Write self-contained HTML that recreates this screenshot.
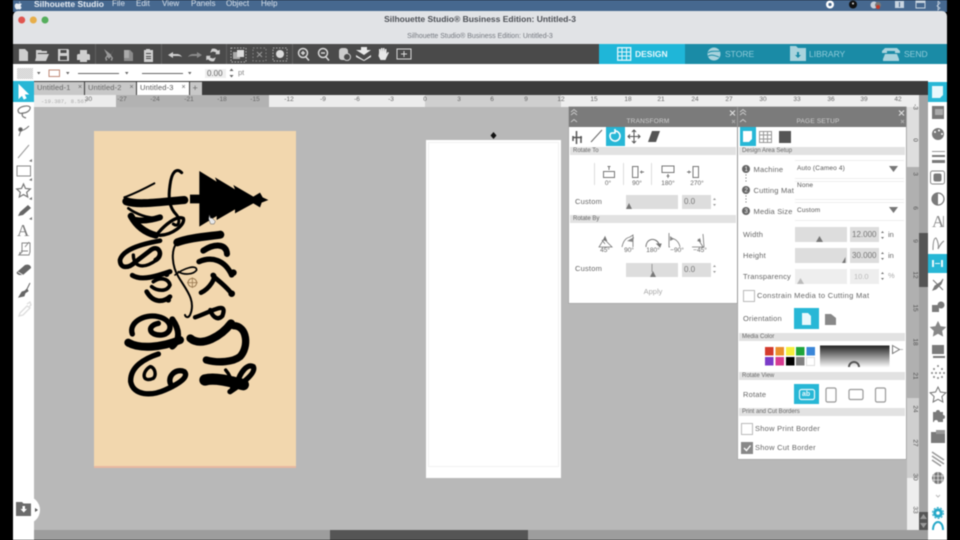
<!DOCTYPE html>
<html><head><meta charset="utf-8"><style>
html,body{margin:0;padding:0;background:#000}
#r{position:relative;width:960px;height:540px;overflow:hidden;background:#000;font-family:"Liberation Sans",sans-serif;filter:blur(.5px)}
.a,.t,.c{position:absolute}
.t{white-space:nowrap;line-height:1;color:#555;font-size:8px}
.c{white-space:nowrap;line-height:1;transform:translateX(-50%);color:#666;font-size:6.5px}
.v{position:absolute;transform:translate(-50%,-50%) rotate(90deg);font-size:6.5px;color:#555;line-height:1}
.b{position:absolute;background:#e2e2e2;height:8px;font-size:6px;color:#666;line-height:8px;padding-left:3px;box-sizing:border-box}
svg{position:absolute;overflow:visible}
.s{position:absolute;background:#ddd}
</style></head><body><div id="r">
<!-- window -->
<div class="a" style="left:13px;top:0;width:934px;height:12px;background:#46688f"></div>
<div class="a" style="left:13px;top:11px;width:934px;height:34px;background:#e1e3e6;border-radius:5px 5px 0 0"></div>
<div class="a" style="left:13px;top:44px;width:586px;height:20px;background:#4a4a4a"></div>
<div class="a" style="left:599px;top:44px;width:86px;height:20px;background:#1fb6d8"></div>
<div class="a" style="left:685px;top:44px;width:262px;height:20px;background:#1a8ba6"></div>
<div class="a" style="left:13px;top:64px;width:934px;height:17px;background:#fff"></div>
<div class="a" style="left:13px;top:81px;width:915px;height:14px;background:#3b3b3b"></div>
<div class="a" style="left:34px;top:95px;width:894px;height:445px;background:#b8b8b8"></div>
<div class="a" style="left:13px;top:81px;width:21px;height:459px;background:#fff"></div>
<div class="a" style="left:928px;top:81px;width:19px;height:459px;background:#fff"></div>
<!-- menu -->
<svg style="left:14px;top:0" width="9" height="10" viewBox="0 0 9 10"><path d="M6 1.500C5.400 1.800 5 2.300 5 3 5.700 3 6.200 2.400 6 1.500ZM7.700 7.400C7.200 8.500 6.600 9.500 5.800 9.500 5.200 9.500 5 9.100 4.400 9.100 3.700 9.100 3.500 9.500 2.900 9.500 1.900 9.500.7 7.600.7 5.900.7 4.300 1.700 3.400 2.700 3.400 3.400 3.400 3.900 3.800 4.400 3.800 4.800 3.800 5.400 3.300 6.200 3.400 6.900 3.400 7.400 3.700 7.800 4.200 6.400 5 6.600 7 7.700 7.400Z" fill="#e8edf3"/></svg>
<div class="t" style="left:34px;top:0;font-size:8.5px;font-weight:bold;color:#e6ebf2">Silhouette Studio</div>
<div class="t" style="left:112px;top:0;font-size:8px;color:#d7e0ea">File</div>
<div class="t" style="left:136px;top:0;font-size:8px;color:#d7e0ea">Edit</div>
<div class="t" style="left:162px;top:0;font-size:8px;color:#d7e0ea">View</div>
<div class="t" style="left:191px;top:0;font-size:8px;color:#d7e0ea">Panels</div>
<div class="t" style="left:226px;top:0;font-size:8px;color:#d7e0ea">Object</div>
<div class="t" style="left:261px;top:0;font-size:8px;color:#d7e0ea">Help</div>
<svg style="left:820px;top:0" width="125" height="11" viewBox="0 0 125 11">
<circle cx="10" cy="4.500" r="4" fill="#fff"/><circle cx="10" cy="4.500" r="1.600" fill="#46688f"/>
<circle cx="33" cy="4.500" r="4" fill="#111"/><circle cx="33" cy="3.500" r="1" fill="#ddd"/>
<circle cx="54" cy="5" r="3.500" fill="#c8d0da"/><circle cx="58" cy="5" r="3" fill="#777"/><circle cx="58" cy="7" r="2" fill="#c0392b"/>
<rect x="75" y="1" width="9" height="7" fill="#c8d4e0"/><rect x="79" y="2" width="1" height="5" fill="#46688f"/>
<rect x="96" y="1" width="9" height="7" fill="none" stroke="#c8d4e0"/><rect x="96" y="1" width="9" height="2" fill="#c8d4e0"/>
<path d="M118 1l2 2-3 3 3 2-2 2V1" fill="none" stroke="#c8d4e0" stroke-width=".8"/></svg>
<!-- titles -->
<svg style="left:15px;top:15px" width="36" height="10"><circle cx="6.700" cy="5" r="3.500" fill="#e0554f"/><circle cx="18.300" cy="5" r="3.500" fill="#e7ae4a"/><circle cx="30" cy="5" r="3.500" fill="#55ae5c"/></svg>
<div class="c" style="left:480px;top:15px;font-size:8.500px;font-weight:bold;color:#4c4f55">Silhouette Studio® Business Edition: Untitled-3</div>
<div class="c" style="left:480px;top:32.500px;font-size:7px;color:#73777e">Silhouette Studio® Business Edition: Untitled-3</div>
<!-- toolbar icons -->
<svg style="left:13px;top:44px" width="410" height="20" viewBox="13 44 410 20" fill="#cfcfcf">
<path d="M19 49h6l3 3v9h-9z"/>
<path d="M36 50h5l1 1h5v2h-9l-2 6zM37 54h12l-3 7H35z"/>
<path d="M58 49h10l1 1v11H58zM60.500 50v3h6v-3zM60 56v4h7v-4z" fill-rule="evenodd"/>
<path d="M78 54h2v-4h7v4h2l1 1v5h-3v2h-7v-2h-3v-5z"/>
<path d="M104 49l3 6-2 3 1 3 1.500-1-1-2 1-1 1.500 2 1.500-2 1 1-1 2 1.500 1 1-3-2-3 3-6-3 5.500z" fill="#9a9a9a"/>
<path d="M124 50h6l3 3v8h-9z" fill="#8a8a8a"/><rect x="124" y="50" width="5" height="8" fill="#aaa"/>
<path d="M144 50h2v-1h4v1h3v12h-9zM146 53v1h5v-1zM146 56v1h5v-1zM146 58v1h5v-1z" fill-rule="evenodd"/>
<path d="M168 55l5-3v2h4c2 0 4 1 5 3-2-1-3-1-5-1h-4v2z"/>
<path d="M202 55l-5-3v2h-4c-2 0-4 1-5 3 2-1 3-1 5-1h4v2z" fill="#8a8a8a"/>
<path d="M212 49a6 6 0 0 1 6 2l1.500-1v4h-4l1-1a4 4 0 0 0-6-.500zM214 61a6 6 0 0 1-6-2l-1.500 1v-4h4l-1 1a4 4 0 0 0 6 .500z" stroke="#cfcfcf" stroke-width=".5"/>
<rect x="233" y="52" width="7" height="7" fill="#aaa"/><rect x="237" y="50" width="7" height="7" fill="#ddd"/><rect x="231" y="48" width="15" height="14" fill="none" stroke="#aaa" stroke-dasharray="1.500 1.500"/>
<rect x="253" y="48" width="13" height="13" fill="none" stroke="#888" stroke-dasharray="1.500 2"/><path d="M257 52l5 5m0-5l-5 5" stroke="#999" fill="none"/>
<rect x="273" y="48" width="14" height="13" fill="none" stroke="#aaa" stroke-dasharray="1.500 1.500"/><circle cx="280" cy="54" r="4" fill="#ddd"/>
<g fill="none" stroke="#d8d8d8" stroke-width="1.500"><circle cx="303" cy="53" r="4.500"/><path d="M306 57l3 3.500M301 53h4M303 51v4"/><circle cx="323" cy="53" r="4.500"/><path d="M326 57l3 3.500M321 53h4"/></g>
<rect x="339" y="48" width="9" height="12" rx="3" fill="#ccc"/><circle cx="347" cy="57" r="3.500" fill="#4a4a4a" stroke="#ccc"/>
<path d="M361 47h6v3h4l-7 5-8-5h5zM356 55l8 5 7-5v2l-7 4-8-4z" fill="#e8e8e8"/>
<path d="M379 53v-4h1.500v3l.5-4h1.500v4l.5-4h1.500v4l.5-3h1.500v5l1-2 1.500.5-2.500 5-1 2.500h-5l-2-4z" fill="#e8e8e8"/>
<rect x="397" y="49" width="14" height="10" fill="none" stroke="#d8d8d8" stroke-width="1"/><path d="M404 51v6M401 54h6" stroke="#d8d8d8" fill="none"/>
<path d="M95.500 44v20M161.500 44v20M226.500 44v20M292.500 44v20" stroke="#616161" fill="none"/>
</svg>
<!-- nav -->
<svg style="left:617px;top:47px" width="15" height="14"><rect x=".7" y=".7" width="13" height="12.500" fill="none" stroke="#e4f6fb" stroke-width="1.300"/><path d="M5 1v12M9.500 1v12M1 5h13M1 9h13" stroke="#e4f6fb"/></svg>
<div class="t" style="left:635px;top:50px;font-size:8.500px;font-weight:bold;color:#e8f8fc">DESIGN</div>
<svg style="left:707px;top:47px" width="14" height="14"><circle cx="7" cy="7" r="6.500" fill="#a9d3dd"/><path d="M1 6c3-3 8-1 12-2M1 9c4-2 8 0 11 1" stroke="#1a8ba6" fill="none"/></svg>
<div class="t" style="left:725px;top:50px;font-size:8.500px;color:#90cbd9">STORE</div>
<svg style="left:790px;top:46px" width="16" height="15"><path d="M0 0h6l2 2h8v13H0z" fill="#a9d3dd"/><path d="M7 6h2v3h2l-3 3-3-3h2z" fill="#1a8ba6"/></svg>
<div class="t" style="left:809px;top:50px;font-size:8.500px;color:#90cbd9">LIBRARY</div>
<svg style="left:882px;top:48px" width="18" height="13"><path d="M0 3l3-3h12l3 3v2h-5V3H5v2H0zM3 6h12l2 5v2H1v-2z" fill="#a9d3dd"/></svg>
<div class="t" style="left:904px;top:50px;font-size:8.500px;color:#90cbd9">SEND</div>
<!-- options -->
<svg style="left:13px;top:64px" width="240" height="17" viewBox="13 64 240 17">
<defs><pattern id="p" width="2" height="2" patternUnits="userSpaceOnUse"><rect width="2" height="2" fill="#eee"/><rect width="1" height="1" fill="#c8c8c8"/><rect x="1" y="1" width="1" height="1" fill="#c8c8c8"/></pattern></defs>
<rect x="17" y="68" width="16" height="11" fill="url(#p)"/>
<rect x="49" y="70" width="10.500" height="6.500" fill="#fff" stroke="#c08a78"/>
<path d="M78 73.500h41M142 73.500h41" stroke="#666" fill="none"/>
<path d="M37 72h3.500l-1.750 2.500zM66 72h3.500l-1.750 2.500zM125 72h3.500l-1.750 2.500zM188 72h3.500l-1.750 2.500zM229.500 71l2-2.500 2 2.500zM229.500 75l2 2.500 2-2.500z" fill="#666"/>
<rect x="205" y="69" width="21" height="9" fill="#eee"/></svg>
<div class="t" style="left:207px;top:70px;font-size:8px;color:#666">0.00</div>
<div class="t" style="left:238px;top:69px;font-size:7.500px;color:#888">pt</div>
<!-- tabs -->
<div class="a" style="left:34px;top:82px;width:50px;height:13px;background:#c8c8c8"></div>
<div class="a" style="left:85px;top:82px;width:51px;height:13px;background:#c8c8c8"></div>
<div class="a" style="left:137px;top:82px;width:52px;height:13px;background:#fff"></div>
<div class="a" style="left:190px;top:82px;width:12px;height:13px;background:#c8c8c8"></div>
<div class="t" style="left:37px;top:84px;font-size:7.500px;color:#666;letter-spacing:.15px">Untitled-1</div>
<div class="t" style="left:88px;top:84px;font-size:7.500px;color:#666;letter-spacing:.15px">Untitled-2</div>
<div class="t" style="left:140px;top:84px;font-size:7.500px;color:#555;letter-spacing:.15px">Untitled-3</div>
<div class="t" style="left:78px;top:84px;font-size:7px;color:#666">×</div>
<div class="t" style="left:129.500px;top:84px;font-size:7px;color:#666">×</div>
<div class="t" style="left:181.500px;top:84px;font-size:7px;color:#666">×</div>
<div class="t" style="left:192.500px;top:83.500px;font-size:9px;color:#666">+</div>
<!-- h ruler -->
<div class="a" style="left:34px;top:95px;width:82px;height:12px;background:#ececec"></div>
<div class="a" style="left:116px;top:95px;width:153px;height:12px;background:#b2b2b2"></div>
<div class="a" style="left:269px;top:95px;width:156px;height:12px;background:#ececec"></div>
<div class="a" style="left:425px;top:95px;width:136px;height:12px;background:#cfcfcf"></div>
<div class="a" style="left:561px;top:95px;width:346px;height:12px;background:#eeeeee"></div>
<div class="t" style="left:41px;top:99px;font-size:5.500px;color:#aaa;font-family:'Liberation Mono',monospace">-19.387, 8.567</div>
<div class="c" style="left:88.500px;top:97px">30</div><div class="c" style="left:122px;top:97px">-27</div><div class="c" style="left:155px;top:97px">-24</div><div class="c" style="left:189px;top:97px">-21</div><div class="c" style="left:222px;top:97px">-18</div><div class="c" style="left:255px;top:97px">-15</div><div class="c" style="left:289px;top:97px">-12</div><div class="c" style="left:323px;top:97px">-9</div><div class="c" style="left:357px;top:97px">-6</div><div class="c" style="left:391px;top:97px">-3</div><div class="c" style="left:425px;top:97px">0</div><div class="c" style="left:459px;top:97px">3</div><div class="c" style="left:492px;top:97px">6</div><div class="c" style="left:526px;top:97px">9</div><div class="c" style="left:561px;top:97px">12</div><div class="c" style="left:594px;top:97px">15</div><div class="c" style="left:628px;top:97px">18</div><div class="c" style="left:661px;top:97px">21</div><div class="c" style="left:695px;top:97px">24</div><div class="c" style="left:729px;top:97px">27</div><div class="c" style="left:763px;top:97px">30</div><div class="c" style="left:797px;top:97px">33</div><div class="c" style="left:831px;top:97px">36</div><div class="c" style="left:864px;top:97px">39</div><div class="c" style="left:898px;top:97px">42</div>
<!-- v ruler -->
<div class="a" style="left:907px;top:95px;width:12px;height:12px;background:#eeeeee"></div>
<div class="a" style="left:907px;top:107px;width:12px;height:60px;background:#dedede"></div>
<div class="a" style="left:907px;top:167px;width:12px;height:231px;background:#b0b0b0"></div>
<div class="a" style="left:907px;top:398px;width:12px;height:80px;background:#cfcfcf"></div>
<div class="a" style="left:907px;top:478px;width:12px;height:52px;background:#eeeeee"></div>
<div class="a" style="left:919px;top:95px;width:9px;height:417px;background:#a3a3a3"></div>
<div class="a" style="left:919px;top:233px;width:9px;height:54px;background:#555"></div>
<div class="a" style="left:919px;top:512px;width:9px;height:18px;background:#555"></div>
<svg style="left:919px;top:512px" width="9" height="18"><path d="M1 7l3.500-5 3.500 5zM1 11l3.500 5 3.500-5z" fill="#999"/></svg>
<div class="v" style="left:914px;top:107px">-3</div><div class="v" style="left:914px;top:140px">0</div><div class="v" style="left:914px;top:174px">3</div><div class="v" style="left:914px;top:208px">6</div><div class="v" style="left:914px;top:241px">9</div><div class="v" style="left:914px;top:275px">12</div><div class="v" style="left:914px;top:308px">15</div><div class="v" style="left:914px;top:342px">18</div><div class="v" style="left:914px;top:376px">21</div><div class="v" style="left:914px;top:409px">24</div><div class="v" style="left:914px;top:443px">27</div><div class="v" style="left:914px;top:477px">30</div><div class="v" style="left:914px;top:510px">33</div>
<!-- bottom scroll -->
<div class="a" style="left:34px;top:530px;width:296px;height:10px;background:#9d9d9d"></div>
<div class="a" style="left:330px;top:530px;width:198px;height:10px;background:#555"></div>
<div class="a" style="left:528px;top:530px;width:400px;height:10px;background:#9d9d9d"></div>
<!-- pages -->
<div class="a" style="left:94px;top:131px;width:202px;height:337px;background:#f2d7ae;border-bottom:2px solid #e8b8a0;box-sizing:border-box"></div>
<div class="a" style="left:426px;top:140px;width:135px;height:338px;background:#fff"></div>
<div class="a" style="left:428px;top:142px;width:131px;height:325px;border:1px solid #f2f2f2;box-sizing:border-box"></div>
<svg style="left:489px;top:131px" width="9" height="9"><path d="M4.500 1l3 3.500-3 3.500-3-3.500z" fill="#111"/></svg>
<!-- artwork -->
<svg style="left:115px;top:160px" width="160" height="240" viewBox="0 0 480 720">
<path d="M253 33L305 65 300 52 360 88 355 75 415 110 435 98 443 112 460 120 440 128 435 142 415 130 360 160 360 148 305 180 305 168 253 200V130H225V104H253Z" fill="#000"/>
<g fill="none" stroke="#000" stroke-linecap="round" stroke-linejoin="round">
<path d="M34 124C70 136 130 126 208 120" stroke-width="24"/>
<path d="M28 112C60 100 90 85 118 70" stroke-width="6"/>
<path d="M200 38C185 22 170 35 165 75 160 110 160 140 185 165 197 178 192 205 175 192" stroke-width="9"/>
<path d="M40 145C60 160 100 178 135 172" stroke-width="8"/>
<path d="M62 180C85 184 110 180 135 172" stroke-width="18"/>
<path d="M48 168C60 190 80 215 122 226" stroke-width="20"/>
<path d="M130 218C150 195 185 165 205 175 212 195 170 225 135 226" stroke-width="10"/>
<path d="M135 242C90 250 25 265 15 300 15 328 42 325 62 305L105 272C130 250 148 285 122 300" stroke-width="14"/>
<path d="M55 285C55 312 75 335 125 300" stroke-width="10"/>
<path d="M52 346C80 364 130 347 165 335" stroke-width="15"/>
<circle cx="155" cy="343" r="8" fill="#000" stroke="none"/>
<path d="M115 365C135 350 160 355 165 375 155 398 125 392 110 380" stroke-width="11"/>
<path d="M95 395C115 430 145 427 165 410" stroke-width="14"/>
<circle cx="160" cy="420" r="8" fill="#000" stroke="none"/>
<path d="M52 522C40 490 85 460 130 470 175 480 175 520 140 525 100 527 95 497 130 490" stroke-width="16"/>
<path d="M172 478C195 510 195 540 172 560" stroke-width="18"/>
<path d="M40 548C75 568 140 562 195 540" stroke-width="24"/>
<path d="M130 582C90 595 45 620 47 665 55 708 110 708 150 690 195 670 222 650 208 635 180 622 150 655 172 680" stroke-width="16"/>
<path d="M105 620C80 635 80 670 115 655 125 645 120 625 108 620" stroke-width="10"/>
<path d="M187 247C220 234 270 230 316 224" stroke-width="24"/>
<path d="M188 245C165 270 172 320 190 350 210 385 245 420 225 465 220 475 212 472 210 465" stroke-width="6"/>
<path d="M265 272C295 252 335 248 336 282" stroke-width="18"/>
<path d="M252 305C290 288 330 300 350 345" stroke-width="16"/>
<circle cx="355" cy="338" r="10" fill="#000" stroke="none"/>
<path d="M258 398C285 385 305 350 295 345 285 345 320 365 345 395" stroke-width="14"/>
<circle cx="350" cy="401" r="10" fill="#000" stroke="none"/>
<path d="M180 345C205 325 245 312 245 330 235 345 205 345 190 335" stroke-width="5"/>
<path d="M240 472C290 455 340 420 322 468 305 485 290 465 286 450" stroke-width="13"/>
<path d="M226 535C260 564 320 527 348 490" stroke-width="24"/>
<path d="M355 497C398 497 402 562 375 590 355 606 310 610 274 600" stroke-width="22"/>
<path d="M270 660C300 652 345 664 385 674" stroke-width="34"/>
<path d="M345 695C375 675 425 640 415 620 395 610 375 640 368 665" stroke-width="16"/>
<path d="M332 630C345 645 352 665 350 685" stroke-width="10"/>
</g>
<circle cx="232" cy="368" r="13" fill="none" stroke="#9a7a52" stroke-width="3"/><path d="M216 368h32M232 352v32" stroke="#9a7a52" stroke-width="2.500" fill="none"/>
<path d="M283 165l4 10 4-1 10 10-4 8-10 0-6-15z" fill="#e8e8e8" stroke="#555" stroke-width="1.500"/>
</svg>
<!-- left tools -->
<div class="a" style="left:13px;top:81px;width:21px;height:21px;background:#27b7d6"></div>
<svg style="left:13px;top:81px" width="21" height="240" viewBox="13 81 21 240" stroke="#777" fill="none">
<path d="M19 85l0 13 3-3 2 4 2-1-2-4 4 0z" fill="#fff" stroke="#fff"/>
<path d="M18 110c2-4 10-5 12-3 1 3-3 6-7 6-2 3 0 4 3 5M18 110c0 3 2 4 5 3" stroke-width="1.200"/>
<path d="M21 130l-2 6M19 131c4 0 7-2 10-5" stroke-width="1"/><circle cx="20.500" cy="129.500" r="1.800" fill="#555"/>
<path d="M18 158l11-13" stroke="#999"/>
<path d="M29 161l3-2v3zM29 180l3-2v3zM29 199l3-2v3zM29 219l3-2v3z" fill="#777" stroke="none"/>
<rect x="17" y="166" width="13.500" height="10" stroke="#888"/>
<path d="M23.500 184l2 4.500 4.800.5-3.600 3.300 1 4.700-4.200-2.400-4.200 2.400 1-4.700-3.600-3.300 4.800-.5z" stroke-width="1.200"/>
<path d="M18 216l2-4 8-7 3 3-8 7z" fill="#666" stroke="none"/>
<path d="M20 254l2-2 0-9h8v9l-1 3h-10c1-1 1-2 1-3zM21 251h7M25 247l4-5" stroke="#888"/>
<path d="M17 272l8-7c3-1 6 0 6 3l-8 7h-4c-2-1-3-2-2-3z" fill="#666" stroke="none"/><path d="M18 272l5 3" stroke="#eee"/>
<path d="M19 297l3-5 3-1 2-2 3-6-3 6 1 2-3 2-1 3z" fill="#666" stroke="#666"/>
<path d="M19 316l1-3 7-7 3 2-7 7zM27 304l3-2 1 3-2 2" stroke="#ddd" stroke-width="1.300"/>
</svg>
<div class="t" style="left:17px;top:222px;font-family:'Liberation Serif',serif;font-size:17px;color:#777">A</div>
<!-- bottom left -->
<div class="a" style="left:13px;top:496px;width:27px;height:28px;background:#fff;border-radius:0 14px 14px 0"></div>
<svg style="left:15px;top:501px" width="24" height="16"><path d="M1 1h6l1.500 1.500H16V15H1z" fill="#6b6b6b"/><path d="M7.500 5h2.500v3h2l-3.250 3.500L5.500 8h2z" fill="#fff"/><path d="M20 7l3 2-3 2z" fill="#555"/></svg>
<!-- right tools -->
<div class="a" style="left:928px;top:82px;width:19px;height:20px;background:#27b7d6"></div>
<div class="a" style="left:928px;top:254px;width:19px;height:19px;background:#27b7d6"></div>
<svg style="left:928px;top:81px" width="19" height="459" viewBox="928 81 19 459" fill="#7a7a7a">
<path d="M932 86h11v9l-3 3h-8z" fill="#e8f8fc"/>
<rect x="932" y="106" width="12" height="13" fill="#777"/><rect x="935" y="109" width="8" height="6" fill="#aaa"/>
<circle cx="938" cy="134" r="6"/><circle cx="935" cy="132" r="1" fill="#fff"/><circle cx="939" cy="130.500" r="1" fill="#fff"/><circle cx="942" cy="134" r="1" fill="#fff"/>
<rect x="932" y="151" width="13" height="1" fill="#999"/><rect x="932" y="155" width="13" height="2"/><rect x="932" y="160" width="13" height="3"/>
<rect x="930.500" y="171" width="14" height="13" rx="2" fill="none" stroke="#888"/><rect x="933.500" y="173.500" width="8" height="8" rx="2"/>
<circle cx="938" cy="199" r="6" fill="none" stroke="#777" stroke-width="1.200"/><path d="M938 193a6 6 0 0 0 0 12z"/>
<text x="932" y="227" font-family="Liberation Serif" font-size="17" fill="#888">A</text><rect x="943" y="216" width=".8" height="11" fill="#888"/>
<path d="M933 250c0-8 1-12 3-12 2 3 3 8 2 11M938 249c2-4 4-7 6-8" fill="none" stroke="#888"/>
<rect x="932" y="260" width="2" height="7" fill="#eaf9fc"/><rect x="941" y="260" width="2" height="7" fill="#eaf9fc"/><path d="M935 263.500h5" stroke="#eaf9fc"/>
<path d="M933 280l10 10M943 279l-2 3-3 2-3 2-2 4 3-1 3-3 2-2z" stroke="#777"/>
<rect x="932" y="305" width="7" height="7"/><circle cx="941" cy="305" r="3.500"/>
<path d="M938 322l2.200 4.600 5 .7-3.600 3.400.9 5-4.500-2.500-4.500 2.500.9-5-3.600-3.400 5-.7z" stroke="#888" fill="#888"/>
<rect x="932" y="345" width="12" height="9"/><path d="M933 356h12v2h-12z"/>
<g fill="#888"><circle cx="938" cy="366" r="1"/><circle cx="934" cy="369" r="1"/><circle cx="942" cy="369" r="1"/><circle cx="932" cy="373" r="1"/><circle cx="936" cy="373" r="1"/><circle cx="940" cy="373" r="1"/><circle cx="944" cy="373" r="1"/><circle cx="934" cy="377" r="1"/><circle cx="942" cy="377" r="1"/><circle cx="938" cy="378" r="1"/></g>
<path d="M938 387l2.400 5 5.500.7-4 3.800 1 5.500-4.900-2.700-4.900 2.700 1-5.500-4-3.800 5.500-.7z" fill="none" stroke="#777"/>
<path d="M933 412h3a2 2 0 0 1 4 0h3v3a2 2 0 0 1 0 4v3h-5a2 2 0 0 0-4 0h-1z"/>
<rect x="931" y="432" width="14" height="11"/><rect x="936" y="430" width="9" height="4" fill="#999"/>
<path d="M932 452l12 8M932 456l12 8M932 460l9 6" stroke="#999" stroke-width="1.500" fill="none"/>
<circle cx="938" cy="478" r="6"/><path d="M934 472v12M938 471v14M942 472v12M932 476h12M932 480h12" stroke="#fff" stroke-width=".6"/>
<path d="M936 495l2 2 2-2" fill="none" stroke="#bbb"/>
<circle cx="938" cy="513" r="4.800" fill="#27a9c9"/><circle cx="938" cy="513" r="1.800" fill="#fff"/><circle cx="938" cy="513" r="5.500" fill="none" stroke="#27a9c9" stroke-dasharray="2 1.500"/>
<path d="M933 530c0-6 3-8 5-8s5 2 5 8" fill="none" stroke="#27a9c9" stroke-width="2"/>
</svg>
<!-- TRANSFORM panel -->
<div class="a" style="left:569px;top:107px;width:168px;height:196px;background:#fff;box-shadow:0 0 0 .5px #999"></div>
<div class="a" style="left:569px;top:107px;width:168px;height:20px;background:#7b7b7b"></div>
<div class="c" style="left:648px;top:119px;color:#cfcfcf;font-size:6.500px;letter-spacing:.2px">TRANSFORM</div>
<svg style="left:569px;top:107px" width="168" height="20"><path d="M2 5l3-2.500 3 2.500M2 8l3-2.500 3 2.500M2 15l3-2.500 3 2.500" fill="none" stroke="#c8c8c8"/><path d="M161 3.500l5 5m0-5l-5 5" stroke="#ddd" stroke-width="1.200"/><path d="M163 13l3 3m0-3l-3 3" stroke="#aaa"/></svg>
<div class="a" style="left:606px;top:127px;width:18.500px;height:19px;background:#27b7d6"></div>
<svg style="left:569px;top:127px" width="168" height="19" viewBox="569 127 168 19" fill="none" stroke="#555">
<path d="M573 136v5M576.500 131v13M581 136v7M573 137.500h9" stroke-width="1.500"/>
<path d="M591 142l11-12" stroke="#666" stroke-width="1"/>
<path d="M611 133a5 5 0 1 0 4-2M615 129v4h-4" stroke="#fff" stroke-width="1.600"/>
<path d="M634 130v13M628 136.500h12M632 132l2-2 2 2M632 141l2 2 2-2M630 134.500l-2 2 2 2M638 134.500l2 2-2 2"/>
<path d="M648 142l4-11h8l-4 11z" fill="#555" stroke="none"/></svg>
<div class="b" style="left:570px;top:147px;width:166px">Rotate To</div>
<div class="b" style="left:570px;top:215px;width:166px">Rotate By</div>
<svg style="left:569px;top:155px" width="168" height="100" viewBox="569 155 168 100" fill="none" stroke="#777">
<path d="M594.500 163v22M623.500 163v22M651.500 163v22" stroke="#ddd"/>
<rect x="603.500" y="171.500" width="11" height="6"/><path d="M609 170v-4M607.500 166.500h3"/>
<rect x="632.500" y="166.500" width="5.500" height="11"/><path d="M640 172h4M641.500 170.500v3"/>
<rect x="662" y="166" width="12" height="6.500"/><path d="M668 174v4M666.500 176h3"/>
<rect x="693" y="166.500" width="5.500" height="11"/><path d="M687 172h4M689 170.500v3"/>
<path d="M599 247h13l-8-8zM602 240l3 4" stroke-width=".8"/><path d="M605 237l-1.500 3 3 .5z" fill="#777"/>
<path d="M622 247c1-5 3-9 8-10l3-2v12" stroke-width=".8"/><path d="M627 241l7-4-1 5z" fill="#888" stroke="none"/>
<path d="M646 247c0-9 10-10 13-3" stroke-width="1"/><path d="M657 244l4 0-1 3z" fill="#777"/>
<path d="M669 233v14h1M671 238c5 1 8 4 9 9" stroke-width=".8"/><path d="M670 236l4 3-4 2z" fill="#888" stroke="none"/>
<path d="M692 247h12l-1-13M703 247l-5-8" stroke-width=".8"/><path d="M697 241l3-3 1 4z" fill="#777" stroke="none"/></svg>
<div class="c" style="left:608px;top:181px">0°</div><div class="c" style="left:637px;top:181px">90°</div><div class="c" style="left:668px;top:181px">180°</div><div class="c" style="left:697px;top:181px">270°</div>
<div class="c" style="left:605px;top:248px">45°</div><div class="c" style="left:629px;top:248px">90°</div><div class="c" style="left:653px;top:248px">180°</div><div class="c" style="left:677px;top:248px">−90°</div><div class="c" style="left:700px;top:248px">−45°</div>
<div class="t" style="left:575px;top:197.500px;font-size:7.500px;color:#666;letter-spacing:.2px">Custom</div>
<div class="t" style="left:575px;top:265px;font-size:7.500px;color:#666;letter-spacing:.2px">Custom</div>
<div class="s" style="left:626px;top:195px;width:52px;height:14px"></div>
<div class="s" style="left:626px;top:263px;width:52px;height:14px"></div>
<div class="s" style="left:682px;top:195px;width:29px;height:14px"></div>
<div class="s" style="left:682px;top:263px;width:29px;height:14px"></div>
<div class="t" style="left:684px;top:198px;font-size:8px;color:#777">0.0</div>
<div class="t" style="left:684px;top:266px;font-size:8px;color:#777">0.0</div>
<svg style="left:625px;top:195px" width="96" height="83" viewBox="625 195 96 83" fill="#777"><path d="M626 209l3-6 3 6zM650 277l3-6 3 6z"/><path d="M651.500 264h1v8h-1zM713 200l1.500-2 1.500 2zM713 204l1.500 2 1.500-2zM713 267l1.500-2 1.500 2zM713 271l1.500 2 1.500-2z" fill="#999"/></svg>
<div class="c" style="left:653px;top:288px;font-size:7.500px;color:#aaa">Apply</div>
<!-- PAGE SETUP panel -->
<div class="a" style="left:738px;top:107px;width:168px;height:352px;background:#fff;box-shadow:0 0 0 .5px #999"></div>
<div class="a" style="left:738px;top:107px;width:168px;height:20px;background:#7b7b7b"></div>
<div class="c" style="left:818px;top:119px;color:#cfcfcf;font-size:6.500px;letter-spacing:.2px">PAGE SETUP</div>
<svg style="left:738px;top:107px" width="168" height="20"><path d="M2 5l3-2.500 3 2.500M2 8l3-2.500 3 2.500M2 15l3-2.500 3 2.500" fill="none" stroke="#c8c8c8"/><path d="M161 3.500l5 5m0-5l-5 5" stroke="#ddd" stroke-width="1.200"/><path d="M163 13l3 3m0-3l-3 3" stroke="#aaa"/></svg>
<div class="a" style="left:740px;top:127px;width:15.500px;height:19px;background:#27b7d6"></div>
<svg style="left:738px;top:127px" width="60" height="19" viewBox="738 127 60 19"><path d="M743 131h9v8l-3 3h-6z" fill="#fff"/><rect x="759.500" y="131.500" width="12" height="11" fill="none" stroke="#999"/><path d="M763.500 131.500v11M767.500 131.500v11M759.500 135h12M759.500 139h12" stroke="#999"/><rect x="779" y="131" width="12" height="12" fill="#555"/></svg>
<div class="b" style="left:739px;top:147px;width:166px">Design Area Setup</div>
<svg style="left:738px;top:155px" width="168" height="70" viewBox="738 155 168 70">
<circle cx="746" cy="169" r="4" fill="#666"/><circle cx="746" cy="190" r="4" fill="#666"/><circle cx="746" cy="211" r="4" fill="#666"/>
<path d="M746 174.500v1M746 177.500v1M746 180.500v1M746 195.500v1M746 198.500v1M746 201.500v1" stroke="#666"/>
<path d="M795 160.500h109M795 178.500h109M795 181.500h109M795 199.500h109M795 202.500h109M795 220.500h109" stroke="#eee" fill="none"/>
<path d="M889 166h9l-4.500 6zM889 207h9l-4.500 6z" fill="#777"/></svg>
<div class="t" style="left:744.500px;top:166.500px;font-size:6px;color:#fff">1</div>
<div class="t" style="left:744.500px;top:187.500px;font-size:6px;color:#fff">2</div>
<div class="t" style="left:744.500px;top:208.500px;font-size:6px;color:#fff">3</div>
<div class="t" style="left:753.500px;top:165.500px;font-size:7.500px;color:#666;letter-spacing:.2px">Machine</div>
<div class="t" style="left:753.500px;top:186.500px;font-size:7.500px;color:#666;letter-spacing:.2px">Cutting Mat</div>
<div class="t" style="left:753.500px;top:207.500px;font-size:7.500px;color:#666;letter-spacing:.2px">Media Size</div>
<div class="t" style="left:797px;top:165.500px;font-size:6.500px;color:#555;letter-spacing:.15px">Auto (Cameo 4)</div>
<div class="t" style="left:797px;top:182.500px;font-size:6.500px;color:#555;letter-spacing:.15px">None</div>
<div class="t" style="left:797px;top:208px;font-size:6.500px;color:#555;letter-spacing:.15px">Custom</div>
<div class="t" style="left:743px;top:230.500px;font-size:7.500px;color:#666;letter-spacing:.2px">Width</div>
<div class="t" style="left:743px;top:251.500px;font-size:7.500px;color:#666;letter-spacing:.2px">Height</div>
<div class="t" style="left:743px;top:272.500px;font-size:7.500px;color:#666;letter-spacing:.2px">Transparency</div>
<div class="s" style="left:795px;top:227px;width:52px;height:15px"></div>
<div class="s" style="left:795px;top:248px;width:52px;height:15px"></div>
<div class="s" style="left:795px;top:269px;width:52px;height:15px;background:#eee"></div>
<div class="s" style="left:850px;top:227px;width:29px;height:15px"></div>
<div class="s" style="left:850px;top:248px;width:29px;height:15px"></div>
<div class="s" style="left:850px;top:269px;width:29px;height:15px;background:#eee"></div>
<div class="t" style="left:852px;top:231px;font-size:8px;color:#777">12.000</div>
<div class="t" style="left:852px;top:252px;font-size:8px;color:#777">30.000</div>
<div class="t" style="left:854px;top:273px;font-size:7.500px;color:#bbb">10.0</div>
<div class="t" style="left:888px;top:231px;font-size:7.500px;color:#666">in</div>
<div class="t" style="left:888px;top:252px;font-size:7.500px;color:#666">in</div>
<div class="t" style="left:888px;top:272px;font-size:7.500px;color:#aaa">%</div>
<svg style="left:795px;top:227px" width="90" height="58" viewBox="795 227 90 58" fill="#777"><path d="M816 242l3.500-6 3.500 6zM842 263l3.500-6v6z"/><path d="M797 284l3.500-6 3.500 6z" fill="#bbb"/><path d="M881 233l1.500-2 1.500 2zM881 237l1.500 2 1.500-2zM881 254l1.500-2 1.500 2zM881 258l1.500 2 1.500-2zM881 274l1.500-2 1.500 2zM881 278l1.500 2 1.500-2z"/></svg>
<div class="a" style="left:743px;top:290px;width:12px;height:12px;border:1px solid #bbb;box-sizing:border-box"></div>
<div class="t" style="left:757px;top:292px;font-size:7.500px;color:#666;letter-spacing:.3px">Constrain Media to Cutting Mat</div>
<div class="t" style="left:743px;top:314.500px;font-size:7.500px;color:#666;letter-spacing:.2px">Orientation</div>
<div class="a" style="left:794px;top:308px;width:25px;height:21px;background:#27b7d6"></div>
<svg style="left:794px;top:308px" width="44" height="21"><path d="M8 5h6l3 3v9H8z" fill="#e8f8fc"/><path d="M31 6h6l5 4v7H31z" fill="#888"/></svg>
<div class="b" style="left:739px;top:333px;width:166px">Media Color</div>
<svg style="left:738px;top:341px" width="168" height="30" viewBox="738 341 168 30">
<defs><linearGradient id="g" x1="0" y1="0" x2="0" y2="1"><stop offset="0" stop-color="#222"/><stop offset="1" stop-color="#fff"/></linearGradient></defs>
<rect x="765" y="347" width="8.500" height="8.500" fill="#d33a2c"/><rect x="775.500" y="347" width="8.500" height="8.500" fill="#ea8e2c"/><rect x="786" y="347" width="8.500" height="8.500" fill="#f6ee3b"/><rect x="796" y="347" width="8.500" height="8.500" fill="#1fa53c"/><rect x="806.500" y="347" width="8.500" height="8.500" fill="#3a86d8"/>
<rect x="765" y="357" width="8.500" height="8.500" fill="#7a3bc8"/><rect x="775.500" y="357" width="8.500" height="8.500" fill="#d63a90"/><rect x="786" y="357" width="8.500" height="8.500" fill="#000"/><rect x="796" y="357" width="8.500" height="8.500" fill="#808080"/><rect x="806.500" y="357.500" width="8" height="8" fill="#fff" stroke="#ddd"/>
<rect x="820" y="345.500" width="69.500" height="22" fill="url(#g)"/>
<path d="M848 367a6 6 0 0 1 12 0h-2a4 4 0 0 0-8 0z" fill="#555"/>
<path d="M892.500 345.500l7 4-7 4z" fill="#fff" stroke="#777"/><path d="M900 349.500h3" stroke="#bbb"/></svg>
<div class="b" style="left:739px;top:372px;width:166px">Rotate View</div>
<div class="t" style="left:743px;top:390.500px;font-size:7.500px;color:#666;letter-spacing:.2px">Rotate</div>
<div class="a" style="left:794px;top:384px;width:25px;height:20px;background:#27b7d6"></div>
<svg style="left:794px;top:384px" width="95" height="20" viewBox="794 384 95 20" fill="none"><rect x="799.500" y="389.500" width="15" height="10" rx="2" stroke="#e8f8fc" stroke-width="1.200"/><rect x="826" y="388" width="10" height="14" rx="1.500" stroke="#999" stroke-width="1.200"/><rect x="849" y="389.500" width="14" height="10" rx="1.500" stroke="#999" stroke-width="1.200"/><rect x="875.500" y="388" width="10" height="14" rx="1.500" stroke="#999" stroke-width="1.200"/></svg>
<div class="t" style="left:802px;top:391px;font-size:7px;color:#e8f8fc;font-weight:bold">ab</div>
<div class="b" style="left:739px;top:408px;width:166px">Print and Cut Borders</div>
<div class="a" style="left:741px;top:423px;width:12px;height:12px;border:1px solid #bbb;box-sizing:border-box"></div>
<div class="t" style="left:755px;top:424.500px;font-size:7.500px;color:#666;letter-spacing:.25px">Show Print Border</div>
<div class="a" style="left:741px;top:442px;width:12px;height:12px;background:#888"></div>
<svg style="left:741px;top:442px" width="12" height="12"><path d="M3 6l2.500 2.500L9.500 3.500" fill="none" stroke="#fff" stroke-width="1.300"/></svg>
<div class="t" style="left:755px;top:443.500px;font-size:7.500px;color:#666;letter-spacing:.25px">Show Cut Border</div>
</div></body></html>
